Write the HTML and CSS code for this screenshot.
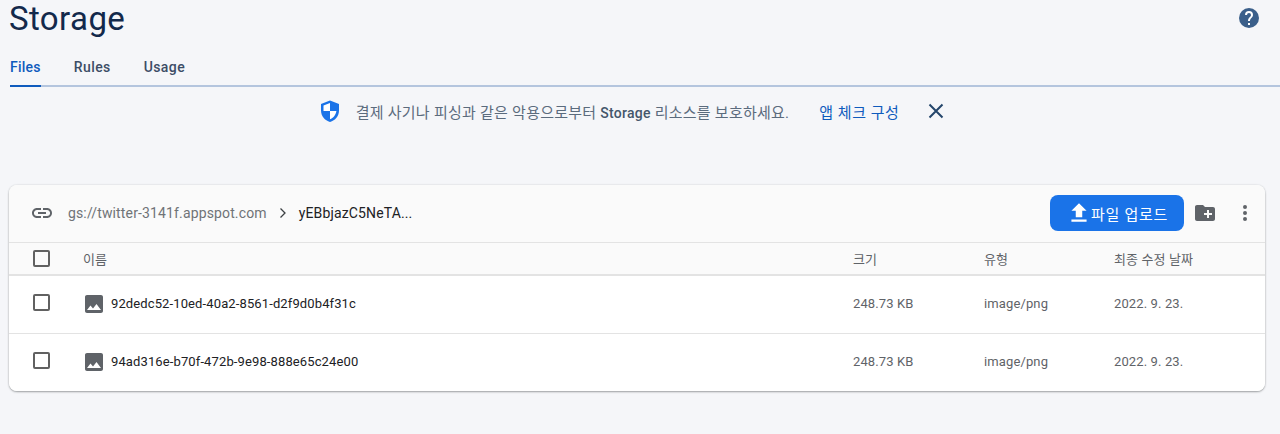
FILE: index.html
```html
<!DOCTYPE html>
<html lang="ko">
<head>
    <meta charset="UTF-8">
    <meta name="viewport" content="width=device-width, initial-scale=1.0">
    <title>Storage</title>
    <link rel="stylesheet" href="styles.css">
</head>
<body>
    <header class="page-head">
        <h1>Storage</h1>
        <svg class="help" viewBox="0 0 24 24" width="24" height="24">
            <path fill="#3b5f8a" d="M12 2a10 10 0 1 0 0 20 10 10 0 0 0 0-20z"/>
            <path fill="#fff" d="M13 19h-2v-2h2zm2.07-7.75-.9.92C13.45 12.9 13 13.5 13 15h-2v-.5c0-1.1.45-2.1 1.17-2.83l1.24-1.26c.37-.36.59-.86.59-1.41a2 2 0 0 0-4 0H8a4 4 0 0 1 8 0c0 .88-.36 1.68-.93 2.25z"/>
        </svg>
    </header>

    <nav class="tabs">
        <a class="tab active">Files</a>
        <a class="tab">Rules</a>
        <a class="tab">Usage</a>
    </nav>

    <div class="banner">
        <svg class="shield" viewBox="0 0 24 24" width="24" height="24">
            <path fill="#1a73e8" d="M12 1.500 3 5v6.500c0 5.400 3.800 10.100 9 11.500 5.200-1.400 9-6.100 9-11.500V5z"/>
            <path fill="#fff" d="M12 4 5.500 6.600V12H12zM12 12v8.300c3.300-1.100 5.800-4.400 6.400-8.300z"/>
        </svg>
        <span class="banner-text">결제 사기나 피싱과 같은 악용으로부터 <b>Storage</b> 리소스를 보호하세요.</span>
        <a class="banner-link">앱 체크 구성</a>
        <svg class="close" viewBox="0 0 24 24" width="24" height="24">
            <path fill="none" stroke="#24466b" stroke-width="2" d="M5.500 5.500l13 13M18.500 5.500l-13 13"/>
        </svg>
    </div>

    <section class="card">
        <div class="toolbar">
            <svg class="link-icon" viewBox="0 0 24 24" width="24" height="24">
                <path fill="#5f6368" d="M3.900 12c0-1.710 1.390-3.100 3.100-3.100h4V7H7c-2.760 0-5 2.240-5 5s2.240 5 5 5h4v-1.900H7c-1.710 0-3.100-1.390-3.100-3.100zM8 13h8v-2H8zm9-6h-4v1.900h4c1.710 0 3.100 1.390 3.100 3.100s-1.390 3.100-3.100 3.100h-4V17h4c2.760 0 5-2.240 5-5s-2.240-5-5-5z"/>
            </svg>
            <span class="bucket">gs://twitter-3141f.appspot.com</span>
            <svg class="chevron" viewBox="0 0 12 12" width="12" height="12">
                <path fill="none" stroke="#3c4043" stroke-width="1.300" d="M3.500 1.500 8 6l-4.500 4.500"/>
            </svg>
            <span class="folder">yEBbjazC5NeTA...</span>
            <button class="upload">
                <svg viewBox="0 0 24 24" width="26" height="26">
                    <path fill="#fff" d="M9 16h6v-6h4l-7-7-7 7h4zm-4 2h14v2H5z"/>
                </svg>
                파일 업로드
            </button>
            <svg class="new-folder" viewBox="0 0 24 24" width="24" height="24">
                <path fill="#5f6368" d="M20 6h-8l-2-2H4c-1.100 0-2 .9-2 2v12c0 1.100.9 2 2 2h16c1.100 0 2-.9 2-2V8c0-1.100-.9-2-2-2zm-1 8h-3v3h-2v-3h-3v-2h3V9h2v3h3z"/>
            </svg>
            <svg class="more" viewBox="0 0 24 24" width="24" height="24">
                <path fill="#5f6368" d="M12 8a2 2 0 1 0 0-4 2 2 0 0 0 0 4zm0 2a2 2 0 1 0 0 4 2 2 0 0 0 0-4zm0 6a2 2 0 1 0 0 4 2 2 0 0 0 0-4z"/>
            </svg>
        </div>

        <div class="row row-head">
            <span class="check"></span>
            <span class="name">이름</span>
            <span>크기</span>
            <span>유형</span>
            <span>최종 수정 날짜</span>
        </div>

        <div class="row">
            <span class="check"></span>
            <span class="name">
                <svg viewBox="0 0 24 24" width="24" height="24">
                    <path fill="#5f6368" d="M21 19V5c0-1.100-.9-2-2-2H5c-1.100 0-2 .9-2 2v14c0 1.100.9 2 2 2h14c1.100 0 2-.9 2-2zM8.500 13.500l2.500 3 3.500-4.500 4.500 6H5z"/>
                </svg>
                92dedc52-10ed-40a2-8561-d2f9d0b4f31c
            </span>
            <span>248.73 KB</span>
            <span>image/png</span>
            <span>2022. 9. 23.</span>
        </div>

        <div class="row">
            <span class="check"></span>
            <span class="name">
                <svg viewBox="0 0 24 24" width="24" height="24">
                    <path fill="#5f6368" d="M21 19V5c0-1.100-.9-2-2-2H5c-1.100 0-2 .9-2 2v14c0 1.100.9 2 2 2h14c1.100 0 2-.9 2-2zM8.500 13.500l2.500 3 3.500-4.500 4.500 6H5z"/>
                </svg>
                94ad316e-b70f-472b-9e98-888e65c24e00
            </span>
            <span>248.73 KB</span>
            <span>image/png</span>
            <span>2022. 9. 23.</span>
        </div>
    </section>
</body>
</html>
```

FILE: styles.css
```css
body {
    font-family: Roboto, "Noto Sans CJK KR", sans-serif;
    background-color: #f5f6f9;
    color: #5f6368;
    margin: 0;
    padding: 0;
    height: 434px;
    overflow: hidden;
}

.page-head {
    display: flex;
    justify-content: space-between;
    align-items: center;
    height: 36px;
    padding: 0 19px 0 9px;
}
.page-head h1 {
    margin: 0;
    font-size: 33px;
    letter-spacing: 0.4px;
    font-weight: 400;
    color: #13294b;
}

.tabs {
    display: flex;
    gap: 33px;
    height: 51px;
    margin: 0 0 0 10px;
    box-sizing: border-box;
    border-bottom: 2px solid #b4c5de;
    padding-top: 23px;
}
.tab {
    font-size: 14px;
    font-weight: 500;
    letter-spacing: 0.4px;
    color: #3c4d66;
    height: 26px;
}
.tab.active {
    color: #0f5bbd;
    letter-spacing: 0.25px;
    border-bottom: 2px solid #0f5bbd;
    border-radius: 2px 2px 0 0;
}

.banner {
    display: flex;
    align-items: center;
    justify-content: center;
    height: 48px;
    font-size: 15px;
    letter-spacing: 0.25px;
    padding-right: 14px;
}
.banner-text {
    margin-left: 14px;
    color: #5b6b7d;
}
.banner-text b {
    font-size: 14px;
    font-weight: 500;
    color: #44566b;
}
.banner-link {
    margin-left: 30px;
    color: #0f5bbd;
    letter-spacing: 0.5px;
}
.close {
    margin-left: 25px;
}

.card {
    margin: 50px 15px 0 9px;
    background-color: #fff;
    border-radius: 8px;
    overflow: hidden;
    box-shadow: 0 1px 2px rgba(60, 64, 67, 0.45), 0 0 2px rgba(60, 64, 67, 0.15);
}

.toolbar {
    display: flex;
    align-items: center;
    height: 56px;
    background-color: #fafafa;
    border-bottom: 1px solid #e3e3e3;
    font-size: 14px;
    letter-spacing: 0.14px;
    padding: 0 8px 1px 21px;
}
.bucket {
    margin-left: 14px;
    color: #6f7377;
}
.chevron {
    margin-left: 10px;
}
.folder {
    margin-left: 10px;
    color: #202124;
}
.upload {
    display: flex;
    align-items: center;
    justify-content: center;
    gap: 0;
    margin-left: auto;
    width: 134px;
    height: 36px;
    padding: 0;
    background-color: #1a73e8;
    border: 0;
    border-radius: 8px;
    color: #fff;
    font-family: inherit;
    font-size: 15px;
    letter-spacing: 0.7px;
}
.upload svg {
    margin-right: -1px;
}
.new-folder {
    margin-left: 9px;
}
.more {
    margin-left: 16px;
}

.row {
    display: grid;
    grid-template-columns: 50px 770px 131px 130px 1fr;
    align-items: center;
    height: 55px;
    padding: 0 0 2px 24px;
    font-size: 13px;
    letter-spacing: 0.12px;
    background-color: #fff;
    border-bottom: 1px solid #e3e3e3;
}
.row:last-child {
    border-bottom: 0;
}
.row .check {
    margin-bottom: 2px;
}
.row-head {
    height: 31px;
    padding-bottom: 0;
    background-color: #fafafa;
    border-bottom-width: 2px;
}
.row-head .check {
    margin-bottom: 0;
}
.name {
    display: flex;
    align-items: center;
    gap: 5px;
}
.row .name {
    color: #202124;
    margin-left: -1px;
}
.row-head .name {
    color: #5f6368;
    margin-left: 0;
}
.check {
    width: 13px;
    height: 13px;
    border: 2px solid #616161;
    border-radius: 2px;
}
```
